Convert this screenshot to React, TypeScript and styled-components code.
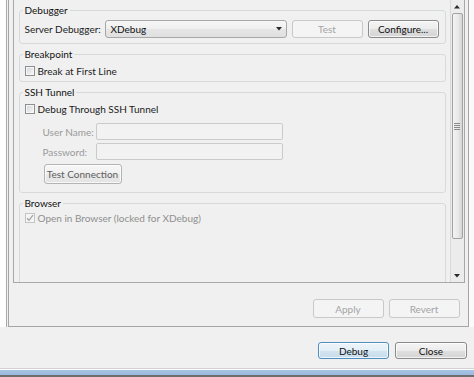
import styled, { createGlobalStyle } from "styled-components";

const GlobalStyle = createGlobalStyle`
  html, body {
    margin: 0;
    padding: 0;
    background: #f0f0f0;
  }
  body {
    font-family: Lato, "Open Sans", sans-serif;
    font-size: 10px;
    color: #1b1b1b;
  }
  * {
    box-sizing: border-box;
  }
`;

type Variant = "normal" | "disabled" | "muted" | "primary";

export default function App() {
  return (
    <>
      <GlobalStyle />
      <Window>
        <Main>
          <LeftStrip />
          <Panel>
            <Viewport>
              <Content>
                <Group $pt={4} $pb={5}>
                  <Legend>Debugger</Legend>
                  <FieldRow>
                    <Label $w={75}>Server Debugger:</Label>
                    <Combo>
                      <span>XDebug</span>
                      <DownTriangle />
                    </Combo>
                    <Button $w={71} $h={18} $variant="disabled">
                      Test
                    </Button>
                    <Button $w={71} $h={18} $variant="normal">
                      Configure...
                    </Button>
                  </FieldRow>
                </Group>

                <Group $pt={5} $pb={4}>
                  <Legend>Breakpoint</Legend>
                  <Check label="Break at First Line" />
                </Group>

                <Group $pt={5} $pb={8}>
                  <Legend>SSH Tunnel</Legend>
                  <Check label="Debug Through SSH Tunnel" />
                  <SubForm>
                    <FieldRow>
                      <Label $w={48} $disabled>
                        User Name:
                      </Label>
                      <TextInput />
                    </FieldRow>
                    <FieldRow>
                      <Label $w={48} $disabled>
                        Password:
                      </Label>
                      <TextInput />
                    </FieldRow>
                    <TestConnection $w={78} $h={20} $variant="muted">
                      Test Connection
                    </TestConnection>
                  </SubForm>
                </Group>

                <Group $pt={3} $pb={80}>
                  <Legend>Browser</Legend>
                  <Check label="Open in Browser (locked for XDebug)" checked disabled />
                </Group>
              </Content>
              <Scrollbar>
                <ArrowButton>
                  <UpTriangle />
                </ArrowButton>
                <Thumb>
                  <Grip />
                </Thumb>
                <Track />
                <ArrowButton>
                  <DownTriangle />
                </ArrowButton>
              </Scrollbar>
            </Viewport>
            <ApplyRow>
              <Button $w={71} $h={19} $variant="disabled">
                Apply
              </Button>
              <Button $w={71} $h={19} $variant="disabled">
                Revert
              </Button>
            </ApplyRow>
          </Panel>
          <RightStrip />
        </Main>
        <Footer>
          <Button $w={71} $h={17} $variant="primary">
            Debug
          </Button>
          <Button $w={72} $h={17} $variant="normal">
            Close
          </Button>
        </Footer>
        <FrameEdge />
      </Window>
    </>
  );
}

function Check({ label, checked, disabled }: { label: string; checked?: boolean; disabled?: boolean }) {
  return (
    <CheckRow $disabled={disabled}>
      <Box $disabled={disabled}>
        {checked && (
          <svg width="8" height="8" viewBox="0 0 8 8">
            <path d="M1 4.2 L3 6.3 L7 1.2" fill="none" stroke="#a3a3a3" strokeWidth="1.3" />
          </svg>
        )}
      </Box>
      {label}
    </CheckRow>
  );
}

function DownTriangle() {
  return (
    <svg width="6" height="4" viewBox="0 0 6 4">
      <path d="M0 0 L6 0 L3 3.5 Z" fill="#2a2a2a" />
    </svg>
  );
}

function UpTriangle() {
  return (
    <svg width="6" height="4" viewBox="0 0 6 4">
      <path d="M0 3.5 L6 3.5 L3 0 Z" fill="#2a2a2a" />
    </svg>
  );
}

function Grip() {
  return (
    <svg width="6" height="7" viewBox="0 0 6 7">
      <path d="M0 0.5 H6 M0 2.5 H6 M0 4.5 H6 M0 6.5 H6" stroke="#8a8a8a" strokeWidth="1" />
    </svg>
  );
}

const Window = styled.div`
  width: 474px;
  height: 377px;
  display: flex;
  flex-direction: column;
  overflow: hidden;
  background: #f0f0f0;
`;

const Main = styled.div`
  height: 327px;
  display: flex;
`;

const LeftStrip = styled.div`
  width: 7px;
  margin-right: 1px;
  background: #fdfdfd;
  border-right: 1px solid #a9a9a9;
`;

const RightStrip = styled.div`
  width: 6px;
  background: #fafafa;
`;

const Panel = styled.div`
  flex: 1;
  display: flex;
  flex-direction: column;
  border: 1px solid #a4a4a4;
  border-top: none;
  padding: 0 3px 8px 4px;
`;

const Viewport = styled.div`
  height: 283px;
  display: flex;
  overflow: hidden;
  border: 1px solid #a8a8a8;
  border-top: none;
`;

const Content = styled.div`
  flex: 1;
  display: flex;
  flex-direction: column;
  gap: 4px;
  padding: 4px 4px 0 5px;
`;

const Group = styled.fieldset<{ $pt: number; $pb: number }>`
  margin: 0;
  min-width: 0;
  flex-shrink: 0;
  border: 1px solid #d6dadd;
  border-radius: 3px;
  padding: ${(p) => p.$pt}px 6px ${(p) => p.$pb}px 5px;
`;

const Legend = styled.legend`
  padding: 0 2px;
  margin-left: -2px;
  line-height: 12px;
  font-size: 10px;
  color: #111;
`;

const FieldRow = styled.div`
  display: flex;
  align-items: center;
  gap: 5px;
`;

const Label = styled.span<{ $w: number; $disabled?: boolean }>`
  width: ${(p) => p.$w}px;
  flex-shrink: 0;
  white-space: nowrap;
  color: ${(p) => (p.$disabled ? "#9a9a9a" : "#1b1b1b")};
`;

const Combo = styled.div`
  width: 182px;
  height: 18px;
  display: flex;
  align-items: center;
  justify-content: space-between;
  padding: 0 4px 0 5px;
  border: 1px solid #a7a7a7;
  border-radius: 3px;
  background: linear-gradient(#f7f7f7, #efefef 50%, #e6e6e6 50%, #e0e0e0);
  color: #111;
`;

const Button = styled.button<{ $w: number; $h: number; $variant: Variant }>`
  width: ${(p) => p.$w}px;
  height: ${(p) => p.$h}px;
  padding: 0;
  font-family: inherit;
  font-size: 10px;
  border-radius: 3px;
  border: 1px solid
    ${(p) =>
      p.$variant === "primary"
        ? "#4f8fc0"
        : p.$variant === "disabled"
        ? "#c6c8ca"
        : p.$variant === "muted"
        ? "#b4b4b4"
        : "#8a8a8a"};
  color: ${(p) =>
    p.$variant === "disabled" ? "#a4a4a4" : p.$variant === "muted" ? "#5e5e5e" : "#111"};
  background: ${(p) =>
    p.$variant === "primary"
      ? "linear-gradient(#eef5fa, #e3eef6 50%, #d3e4f1 50%, #c9ddec)"
      : p.$variant === "disabled"
      ? "#f4f4f4"
      : p.$variant === "muted"
      ? "linear-gradient(#f7f7f7, #f0f0f0 50%, #e9e9e9 50%, #e4e4e4)"
      : "linear-gradient(#f4f4f4, #ececec 50%, #dfdfdf 50%, #d5d5d5)"};
  box-shadow: inset 0 0 0 1px
    ${(p) => (p.$variant === "disabled" ? "#f4f4f4" : "rgba(255,255,255,0.7)")};
`;

const TestConnection = styled(Button)`
  margin-left: 1px;
`;

const CheckRow = styled.div<{ $disabled?: boolean }>`
  display: flex;
  align-items: center;
  gap: 3px;
  height: 12px;
  white-space: nowrap;
  color: ${(p) => (p.$disabled ? "#8f8f8f" : "#1b1b1b")};
`;

const Box = styled.span<{ $disabled?: boolean }>`
  width: 10px;
  height: 10px;
  display: flex;
  align-items: center;
  justify-content: center;
  border: 1px solid ${(p) => (p.$disabled ? "#c4c4c4" : "#8e8f8f")};
  background: ${(p) =>
    p.$disabled ? "#f4f4f4" : "linear-gradient(135deg, #d4d6d9, #f7f7f7)"};
  box-shadow: inset 0 0 0 1px #f6f6f6;
`;

const SubForm = styled.div`
  display: flex;
  flex-direction: column;
  align-items: flex-start;
  gap: 3px;
  margin-top: 8px;
  padding-left: 18px;

  & > button {
    margin-top: 1px;
  }
`;

const TextInput = styled.div`
  width: 187px;
  height: 17px;
  border: 1px solid #cbcbcb;
  background: #f2f2f2;
  border-radius: 2px;
`;

const Scrollbar = styled.div`
  width: 14px;
  display: flex;
  flex-direction: column;
  background: #ececec;
  border-left: 1px solid #d9d9d9;
`;

const ArrowButton = styled.div`
  height: 13px;
  display: flex;
  align-items: center;
  justify-content: center;
  flex-shrink: 0;
`;

const Thumb = styled.div`
  height: 226px;
  margin: 0 1px;
  display: flex;
  align-items: center;
  justify-content: center;
  border: 1px solid #a2a2a2;
  border-radius: 2px;
  background: linear-gradient(90deg, #f3f3f3, #e9e9e9 55%, #d4d4d4);
`;

const Track = styled.div`
  flex: 1;
`;

const ApplyRow = styled.div`
  display: flex;
  justify-content: flex-end;
  gap: 5px;
  margin-top: 16px;
  padding-right: 5px;
`;

const Footer = styled.div`
  height: 41px;
  display: flex;
  justify-content: flex-end;
  align-items: flex-start;
  gap: 6px;
  padding: 15px 7px 0 0;
`;

const FrameEdge = styled.div`
  height: 9px;
  background: linear-gradient(
    #d2d2d2 0,
    #d2d2d2 1px,
    #fbfbfb 1px,
    #fbfbfb 2px,
    #a9c4e4 2px,
    #9ab9df 7px,
    #6e6e6e 7px,
    #6e6e6e 9px
  );
`;
